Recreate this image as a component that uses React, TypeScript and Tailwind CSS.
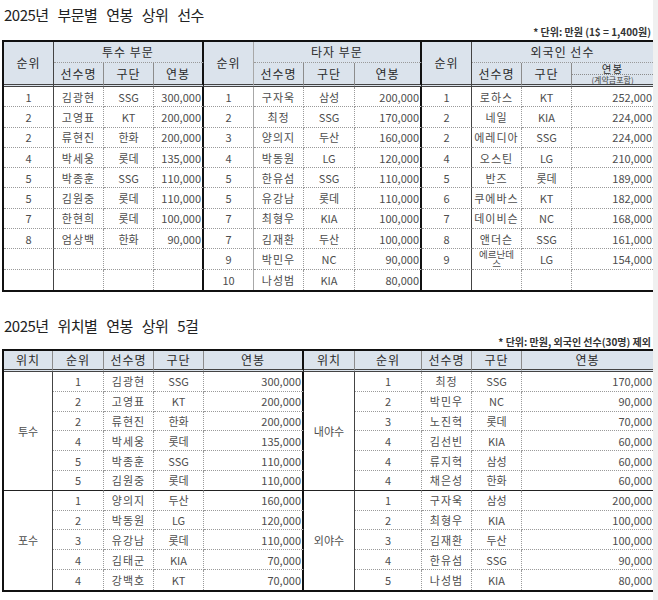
import React from "react";

const R_DOT = "[border-right:1px_dotted_#9a9a9a]";
const R_SOLID = "[border-right:1px_solid_#444]";
const R_GRAY = "[border-right:1px_solid_#a8a8a8]";
const R_THICK = "[border-right:2px_solid_#111]";
const R_HEAD = "[border-right:1px_solid_#8c8c8c]";
const B_DOT = "[border-bottom:1px_dotted_#9a9a9a]";
const B_SOLID = "[border-bottom:1px_solid_#222]";
const B_DOUBLE = "[border-bottom:3px_double_#444]";

type Row = [string, string, string, string] | null;

const pitchers: Row[] = [
  ["1", "김광현", "SSG", "300,000"],
  ["2", "고영표", "KT", "200,000"],
  ["2", "류현진", "한화", "200,000"],
  ["4", "박세웅", "롯데", "135,000"],
  ["5", "박종훈", "SSG", "110,000"],
  ["5", "김원중", "롯데", "110,000"],
  ["7", "한현희", "롯데", "100,000"],
  ["8", "엄상백", "한화", "90,000"],
  null,
  null,
];
const hitters: Row[] = [
  ["1", "구자욱", "삼성", "200,000"],
  ["2", "최정", "SSG", "170,000"],
  ["3", "양의지", "두산", "160,000"],
  ["4", "박동원", "LG", "120,000"],
  ["5", "한유섬", "SSG", "110,000"],
  ["5", "유강남", "롯데", "110,000"],
  ["7", "최형우", "KIA", "100,000"],
  ["7", "김재환", "두산", "100,000"],
  ["9", "박민우", "NC", "90,000"],
  ["10", "나성범", "KIA", "80,000"],
];
const foreigners: Row[] = [
  ["1", "로하스", "KT", "252,000"],
  ["2", "네일", "KIA", "224,000"],
  ["2", "에레디아", "SSG", "224,000"],
  ["4", "오스틴", "LG", "210,000"],
  ["5", "반즈", "롯데", "189,000"],
  ["6", "쿠에바스", "KT", "182,000"],
  ["7", "데이비슨", "NC", "168,000"],
  ["8", "앤더슨", "SSG", "161,000"],
  ["9", "에르난데스", "LG", "154,000"],
  null,
];

const t1ColR = [R_SOLID, R_DOT, R_DOT, R_THICK, R_GRAY, R_DOT, R_DOT, R_THICK, R_SOLID, R_DOT, R_DOT, ""];
const t1Widths = [50, 50, 50, 50, 50, 50, 51, 67, 50, 50, 50, 81];

const left2: [string, string, string, string][] = [
  ["1", "김광현", "SSG", "300,000"],
  ["2", "고영표", "KT", "200,000"],
  ["2", "류현진", "한화", "200,000"],
  ["4", "박세웅", "롯데", "135,000"],
  ["5", "박종훈", "SSG", "110,000"],
  ["5", "김원중", "롯데", "110,000"],
  ["1", "양의지", "두산", "160,000"],
  ["2", "박동원", "LG", "120,000"],
  ["3", "유강남", "롯데", "110,000"],
  ["4", "김태군", "KIA", "70,000"],
  ["4", "강백호", "KT", "70,000"],
];
const right2: [string, string, string, string][] = [
  ["1", "최정", "SSG", "170,000"],
  ["2", "박민우", "NC", "90,000"],
  ["3", "노진혁", "롯데", "70,000"],
  ["4", "김선빈", "KIA", "60,000"],
  ["4", "류지혁", "삼성", "60,000"],
  ["4", "채은성", "한화", "60,000"],
  ["1", "구자욱", "삼성", "200,000"],
  ["2", "최형우", "KIA", "100,000"],
  ["3", "김재환", "두산", "100,000"],
  ["4", "한유섬", "SSG", "90,000"],
  ["5", "나성범", "KIA", "80,000"],
];
const t2ColR = [R_SOLID, R_DOT, R_DOT, R_DOT, R_THICK, R_SOLID, R_DOT, R_DOT, R_DOT, ""];
const t2Widths = [49, 51, 50, 50, 100, 51, 67, 50, 50, 131];

const HEAD_BG = "bg-[#dbe3ec]";
const HEAD_TXT = "text-[12px] text-[#2a2a2a] tracking-[1px] text-center align-middle p-0 font-normal";
const DATA_TXT = "text-[11px] text-[#4d4d4d] p-0 align-middle leading-[12px]";

function Table1() {
  const groups = [pitchers, hitters, foreigners];
  const titles = ["투수 부문", "타자 부문", "외국인 선수"];
  return (
    <table className="table-fixed border-separate border-spacing-0 w-[649px] border-2 border-[#111]">
      <colgroup>
        {t1Widths.map((w, i) => (
          <col key={i} style={{ width: w }} />
        ))}
      </colgroup>
      <thead>
        <tr>
          {titles.map((t, g) => (
            <React.Fragment key={g}>
              <th rowSpan={2} className={`${HEAD_BG} ${HEAD_TXT} ${t1ColR[g * 4]} ${B_DOUBLE}`}>
                순위
              </th>
              <th
                colSpan={3}
                className={`${HEAD_BG} ${HEAD_TXT} h-[21px] ${g < 2 ? R_THICK : ""} ${B_DOT}`}
              >
                {t}
              </th>
            </React.Fragment>
          ))}
        </tr>
        <tr>
          {titles.map((_, g) => (
            <React.Fragment key={g}>
              <th className={`${HEAD_BG} ${HEAD_TXT} h-[24px] ${R_HEAD} ${B_DOUBLE}`}>선수명</th>
              <th className={`${HEAD_BG} ${HEAD_TXT} ${R_HEAD} ${B_DOUBLE}`}>구단</th>
              {g < 2 ? (
                <th className={`${HEAD_BG} ${HEAD_TXT} ${R_THICK} ${B_DOUBLE}`}>연봉</th>
              ) : (
                <th className={`${HEAD_BG} ${HEAD_TXT} ${B_DOUBLE}`}>
                  <div className="flex flex-col items-stretch h-[21px]">
                    <div className="h-[11px] leading-[11px] text-[10.5px]">연봉</div>
                    <div className="h-[10px] [border-top:1px_dotted_#8c8c8c] text-[8px] leading-[9px] tracking-[0px] text-[#444]">
                      (계약금포함)
                    </div>
                  </div>
                </th>
              )}
            </React.Fragment>
          ))}
        </tr>
      </thead>
      <tbody>
        {Array.from({ length: 10 }).map((_, r) => {
          const bottom = r < 9 ? B_DOT : "";
          return (
            <tr key={r}>
              {groups.map((grp, g) => {
                const row = grp[r];
                const base = g * 4;
                return (
                  <React.Fragment key={g}>
                    <td className={`${DATA_TXT} h-[20.3px] text-center ${t1ColR[base]} ${bottom}`}>
                      {row ? row[0] : ""}
                    </td>
                    <td className={`${DATA_TXT} text-center tracking-[1px] ${t1ColR[base + 1]} ${bottom}`}>
                      {row ? (
                        row[1] === "에르난데스" ? (
                          <span className="block text-[9.5px] leading-[9px] tracking-[0px]">
                            에르난데
                            <br />스
                          </span>
                        ) : (
                          row[1]
                        )
                      ) : (
                        ""
                      )}
                    </td>
                    <td className={`${DATA_TXT} text-center ${t1ColR[base + 2]} ${bottom}`}>
                      {row ? row[2] : ""}
                    </td>
                    <td className={`${DATA_TXT} text-right pr-[1px] ${t1ColR[base + 3]} ${bottom}`}>
                      {row ? row[3] : ""}
                    </td>
                  </React.Fragment>
                );
              })}
            </tr>
          );
        })}
      </tbody>
    </table>
  );
}

function Table2() {
  const heads = ["위치", "순위", "선수명", "구단", "연봉", "위치", "순위", "선수명", "구단", "연봉"];
  const headR = [R_HEAD, R_HEAD, R_HEAD, R_HEAD, R_THICK, R_HEAD, R_HEAD, R_HEAD, R_HEAD, ""];
  return (
    <table className="table-fixed border-separate border-spacing-0 w-[649px] border-2 border-[#111]">
      <colgroup>
        {t2Widths.map((w, i) => (
          <col key={i} style={{ width: w }} />
        ))}
      </colgroup>
      <thead>
        <tr>
          {heads.map((h, i) => (
            <th key={i} className={`${HEAD_BG} ${HEAD_TXT} h-[21px] ${headR[i]} ${B_DOUBLE}`}>
              {h}
            </th>
          ))}
        </tr>
      </thead>
      <tbody>
        {left2.map((lrow, r) => {
          const bottom = r === 5 ? B_SOLID : r === 10 ? "" : B_DOT;
          const rrow = right2[r];
          return (
            <tr key={r}>
              {r === 0 && (
                <td rowSpan={6} className={`${DATA_TXT} text-center ${t2ColR[0]} ${B_SOLID}`}>
                  투수
                </td>
              )}
              {r === 6 && (
                <td rowSpan={5} className={`${DATA_TXT} text-center ${t2ColR[0]}`}>
                  포수
                </td>
              )}
              <td className={`${DATA_TXT} h-[19.8px] text-center ${t2ColR[1]} ${bottom}`}>{lrow[0]}</td>
              <td className={`${DATA_TXT} text-center tracking-[1px] ${t2ColR[2]} ${bottom}`}>{lrow[1]}</td>
              <td className={`${DATA_TXT} text-center ${t2ColR[3]} ${bottom}`}>{lrow[2]}</td>
              <td className={`${DATA_TXT} text-right pr-[1px] ${t2ColR[4]} ${bottom}`}>{lrow[3]}</td>
              {r === 0 && (
                <td rowSpan={6} className={`${DATA_TXT} text-center ${t2ColR[5]} ${B_SOLID}`}>
                  내야수
                </td>
              )}
              {r === 6 && (
                <td rowSpan={5} className={`${DATA_TXT} text-center ${t2ColR[5]}`}>
                  외야수
                </td>
              )}
              <td className={`${DATA_TXT} text-center ${t2ColR[6]} ${bottom}`}>{rrow[0]}</td>
              <td className={`${DATA_TXT} text-center tracking-[1px] ${t2ColR[7]} ${bottom}`}>{rrow[1]}</td>
              <td className={`${DATA_TXT} text-center ${t2ColR[8]} ${bottom}`}>{rrow[2]}</td>
              <td className={`${DATA_TXT} text-right pr-[1px] ${bottom}`}>{rrow[3]}</td>
            </tr>
          );
        })}
      </tbody>
    </table>
  );
}

export default function App() {
  return (
    <div className="w-[658px] h-[600px] bg-white flex overflow-hidden [font-family:'Noto_Sans_CJK_KR','Noto_Sans',sans-serif]">
      <div className="w-[653px] pl-[2px] flex flex-col">
        <div className="h-[27px] pt-[4px] pl-[2px] text-[15px] leading-[22px] text-[#222] tracking-[-0.5px] [word-spacing:6px]">
          2025년 부문별 연봉 상위 선수
        </div>
        <div className="h-[10px] w-[649px] text-right text-[10px] leading-[10px] font-semibold text-[#333]">
          * 단위: 만원 (1$ = 1,400원)
        </div>
        <div className="mt-[3px]">
          <Table1 />
        </div>
        <div className="mt-[23px] h-[22px] pl-[2px] text-[15px] leading-[22px] text-[#222] tracking-[-0.5px] [word-spacing:6px]">
          2025년 위치별 연봉 상위 5걸
        </div>
        <div className="h-[10px] w-[649px] text-right text-[10px] leading-[10px] font-semibold text-[#333]">
          * 단위: 만원, 외국인 선수(30명) 제외
        </div>
        <div className="mt-[2px]">
          <Table2 />
        </div>
      </div>
      <div className="flex-1 bg-[#f0f0f0]" />
    </div>
  );
}
